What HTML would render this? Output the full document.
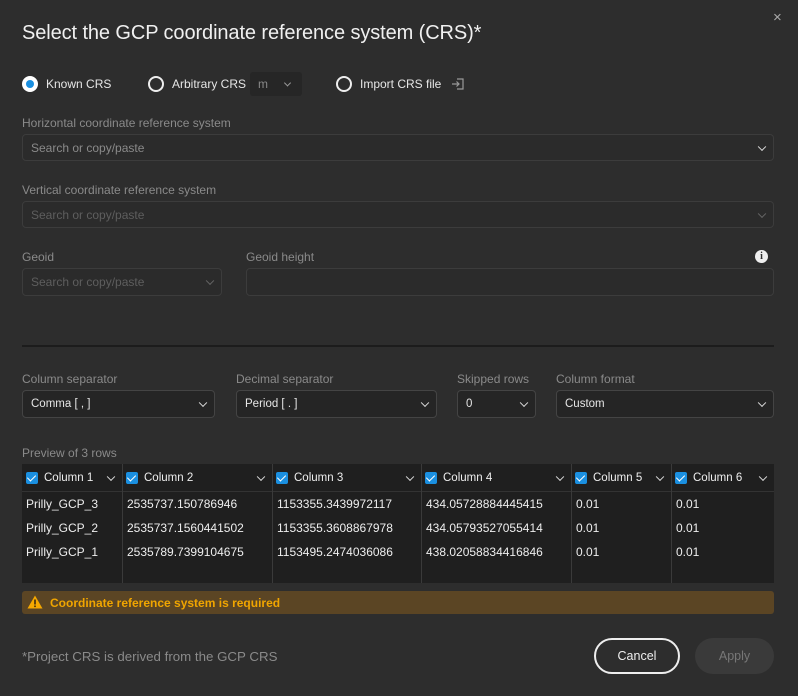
<!DOCTYPE html>
<html><head><style>
*{box-sizing:border-box;margin:0;padding:0}
body{width:798px;height:696px;background:#2d2d2d;font-family:"Liberation Sans",sans-serif;color:#e6e6e6;position:relative;overflow:hidden;font-size:12px}
.a{position:absolute}
.lbl{position:absolute;color:#8a8a8a;font-size:12px}
.inp{position:absolute;border:1px solid #3c3c3c;border-radius:4px;background:#2b2b2b;color:#8a8a8a;font-size:12px;padding-left:8px;display:flex;align-items:center}
.sel{position:absolute;border:1px solid #444;border-radius:4px;background:#252525;color:#e6e6e6;font-size:11.5px;padding-left:8px;display:flex;align-items:center}
.chev{position:absolute;right:8px;top:50%;width:6px;height:6px;border-right:1.5px solid #ddd;border-bottom:1.5px solid #ddd;transform:translateY(-70%) rotate(45deg)}
.radio{position:absolute;width:16px;height:16px;border-radius:50%;border:2px solid #eee}
.th{position:absolute;top:464px;height:27px;display:flex;align-items:center;font-size:11.5px;color:#eee}
.cb{width:12px;height:12px;background:#1a8fe0;border-radius:2px;margin:0 6px 0 4px;position:relative}
.cb:after{content:"";position:absolute;left:3px;top:1px;width:4px;height:7px;border-right:1.5px solid #fff;border-bottom:1.5px solid #fff;transform:rotate(45deg)}
.td{position:absolute;font-size:12px;color:#eee}
.vl{position:absolute;top:464px;width:1px;height:119px;background:#3a3a3a}
</style></head><body>
<div class="a" style="left:22px;top:22px;font-size:20px;color:#f0f0f0;letter-spacing:-0.1px">Select the GCP coordinate reference system (CRS)*</div>
<div class="a" style="left:773px;top:9px;font-size:15px;color:#aaa">×</div>

<div class="radio" style="left:22px;top:76px;border:none;background:#fff"><div style="position:absolute;left:4px;top:4px;width:8px;height:8px;border-radius:50%;background:#1a8fe0"></div></div>
<div class="a" style="left:46px;top:77px;font-size:12px">Known CRS</div>
<div class="radio" style="left:148px;top:76px"></div>
<div class="a" style="left:172px;top:77px;font-size:12px">Arbitrary CRS</div>
<div class="a" style="left:250px;top:72px;width:52px;height:24px;background:#262626;border-radius:3px;color:#888;font-size:12px;padding:5px 0 0 8px">m<div class="chev" style="border-color:#999;width:5px;height:5px;right:12px"></div></div>
<div class="radio" style="left:336px;top:76px"></div>
<div class="a" style="left:360px;top:77px;font-size:12px">Import CRS file</div>
<svg class="a" style="left:451px;top:77px" width="14" height="14" viewBox="0 0 14 14" fill="none" stroke="#999" stroke-width="1.2"><path d="M6 2h6v10H6M1 7h7M5.5 4.5L8 7l-2.5 2.5"/></svg>

<div class="lbl" style="left:22px;top:116px">Horizontal coordinate reference system</div>
<div class="inp" style="left:22px;top:134px;width:752px;height:27px">Search or copy/paste<div class="chev"></div></div>
<div class="lbl" style="left:22px;top:183px">Vertical coordinate reference system</div>
<div class="inp" style="left:22px;top:201px;width:752px;height:27px;color:#5e5e5e">Search or copy/paste<div class="chev" style="border-color:#666"></div></div>

<div class="lbl" style="left:22px;top:250px">Geoid</div>
<div class="inp" style="left:22px;top:268px;width:200px;height:28px;color:#5e5e5e">Search or copy/paste<div class="chev" style="border-color:#666"></div></div>
<div class="lbl" style="left:246px;top:250px">Geoid height</div>
<div class="a" style="left:755px;top:250px;width:13px;height:13px;border-radius:50%;background:#eee;color:#2d2d2d;font-size:10px;font-weight:bold;text-align:center;line-height:13px;font-family:'Liberation Serif',serif">i</div>
<div class="inp" style="left:246px;top:268px;width:528px;height:28px"></div>

<div class="a" style="left:22px;top:345px;width:752px;height:2px;background:#1c1c1c"></div>

<div class="lbl" style="left:22px;top:372px">Column separator</div>
<div class="sel" style="left:22px;top:390px;width:193px;height:28px">Comma [ , ]<div class="chev"></div></div>
<div class="lbl" style="left:236px;top:372px">Decimal separator</div>
<div class="sel" style="left:236px;top:390px;width:201px;height:28px">Period [ . ]<div class="chev"></div></div>
<div class="lbl" style="left:457px;top:372px">Skipped rows</div>
<div class="sel" style="left:457px;top:390px;width:79px;height:28px">0<div class="chev"></div></div>
<div class="lbl" style="left:556px;top:372px">Column format</div>
<div class="sel" style="left:556px;top:390px;width:218px;height:28px">Custom<div class="chev"></div></div>

<div class="lbl" style="left:22px;top:446px">Preview of 3 rows</div>
<div class="a" style="left:22px;top:464px;width:752px;height:119px;background:#1f1f1f"></div>
<div class="a" style="left:22px;top:491px;width:752px;height:1px;background:#333"></div>
<div class="vl" style="left:122px"></div><div class="vl" style="left:272px"></div><div class="vl" style="left:421px"></div><div class="vl" style="left:571px"></div><div class="vl" style="left:671px"></div>

<div class="th" style="left:22px;width:100px"><div class="cb"></div>Column 1<div class="chev" style="top:14px"></div></div>
<div class="th" style="left:122px;width:150px"><div class="cb"></div>Column 2<div class="chev" style="top:14px"></div></div>
<div class="th" style="left:272px;width:149px"><div class="cb"></div>Column 3<div class="chev" style="top:14px"></div></div>
<div class="th" style="left:421px;width:150px"><div class="cb"></div>Column 4<div class="chev" style="top:14px"></div></div>
<div class="th" style="left:571px;width:100px"><div class="cb"></div>Column 5<div class="chev" style="top:14px"></div></div>
<div class="th" style="left:671px;width:103px"><div class="cb"></div>Column 6<div class="chev" style="top:14px"></div></div>

<div class="td" style="left:26px;top:497px">Prilly_GCP_3</div>
<div class="td" style="left:127px;top:497px">2535737.150786946</div>
<div class="td" style="left:277px;top:497px">1153355.3439972117</div>
<div class="td" style="left:426px;top:497px">434.05728884445415</div>
<div class="td" style="left:576px;top:497px">0.01</div>
<div class="td" style="left:676px;top:497px">0.01</div>
<div class="td" style="left:26px;top:521px">Prilly_GCP_2</div>
<div class="td" style="left:127px;top:521px">2535737.1560441502</div>
<div class="td" style="left:277px;top:521px">1153355.3608867978</div>
<div class="td" style="left:426px;top:521px">434.05793527055414</div>
<div class="td" style="left:576px;top:521px">0.01</div>
<div class="td" style="left:676px;top:521px">0.01</div>
<div class="td" style="left:26px;top:545px">Prilly_GCP_1</div>
<div class="td" style="left:127px;top:545px">2535789.7399104675</div>
<div class="td" style="left:277px;top:545px">1153495.2474036086</div>
<div class="td" style="left:426px;top:545px">438.02058834416846</div>
<div class="td" style="left:576px;top:545px">0.01</div>
<div class="td" style="left:676px;top:545px">0.01</div>

<div class="a" style="left:22px;top:591px;width:752px;height:23px;background:#5b4524;border-radius:3px"></div>
<svg class="a" style="left:27px;top:595px" width="16" height="14" viewBox="0 0 16 14"><path d="M8 0.5L15.5 13.5H0.5Z" fill="#f5a800"/><rect x="7.2" y="4.5" width="1.6" height="5" fill="#3a2a10"/><rect x="7.2" y="10.5" width="1.6" height="1.6" fill="#3a2a10"/></svg>
<div class="a" style="left:50px;top:596px;font-size:12px;font-weight:bold;color:#f0a500">Coordinate reference system is required</div>

<div class="a" style="left:22px;top:649px;font-size:13.3px;color:#8a8a8a">*Project CRS is derived from the GCP CRS</div>
<div class="a" style="left:594px;top:638px;width:86px;height:36px;border:2px solid #eee;border-radius:18px;text-align:center;line-height:32px;font-size:12.5px;color:#eee">Cancel</div>
<div class="a" style="left:695px;top:638px;width:79px;height:36px;background:#3a3a3a;border-radius:18px;text-align:center;line-height:36px;font-size:12.5px;color:#777">Apply</div>
</body></html>
